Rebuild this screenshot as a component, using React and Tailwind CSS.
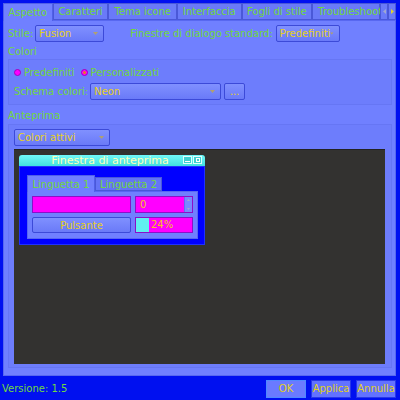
import React from 'react';

const font = { fontFamily: '"DejaVu Sans", sans-serif' };

function Combo({ label, w }) {
    return (
        <div className={`h-[17px] ${w} flex items-center justify-between pl-[3px] pr-[5px] rounded-[2px] border border-[#3c4ad8] bg-gradient-to-b from-[#8090ff] to-[#6a7af8] text-[#e8d020]`}>
            <span className="leading-none">{label}</span>
            <svg width="5" height="3" viewBox="0 0 5 3"><path d="M0 0h5L2.5 3z" fill="#b0a070" /></svg>
        </div>
    );
}

function Tab({ label, active, w }) {
    return active ? (
        <div className={`${w} h-[18px] -mb-px z-10 flex items-center justify-center bg-[#7080ff] border border-b-0 border-[#5060e8] text-[#70d840]`}>{label}</div>
    ) : (
        <div className={`${w} h-[17px] flex items-center justify-center bg-[#6a7af8] border border-[#4a58d8] text-[#70d840]`}>{label}</div>
    );
}

function Radio({ checked, label }) {
    return (
        <div className="flex items-center gap-[3px]">
            <div className="w-[7px] h-[7px] rounded-full bg-[#ff00ff] border border-[#a000c0] flex items-center justify-center">
                {checked && <div className="w-[3px] h-[3px] rounded-full bg-[#e08020]" />}
            </div>
            <span className="text-[#70d840]">{label}</span>
        </div>
    );
}

export default function App() {
    return (
        <div className="w-[400px] h-[400px] bg-[#0010f0] flex flex-col pl-[3px] pr-[4px] pt-[3px] text-[10px] overflow-hidden" style={font}>
            {/* tab bar */}
            <div className="flex items-end h-[17px] relative">
                <Tab label="Aspetto" active w="w-[50px]" />
                <Tab label="Caratteri" w="w-[56px]" />
                <Tab label="Tema icone" w="w-[69px]" />
                <Tab label="Interfaccia" w="w-[65px]" />
                <Tab label="Fogli di stile" w="w-[71px]" />
                <div className="w-[68px] h-[17px] whitespace-nowrap flex items-center pl-[5px] bg-[#6a7af8] border border-[#4a58d8] text-[#70d840]">Troubleshoot</div>
                <div className="w-[8px] h-[17px] bg-[#6a7af8] border border-[#4a58d8] flex items-center justify-center">
                    <svg width="3" height="5" viewBox="0 0 3 5"><path d="M3 0v5L0 2.5z" fill="#a0a8d0" /></svg>
                </div>
                <div className="w-[8px] h-[17px] bg-[#6a7af8] border border-[#4a58d8] flex items-center justify-center">
                    <svg width="3" height="5" viewBox="0 0 3 5"><path d="M0 0v5L3 2.5z" fill="#e0d030" /></svg>
                </div>
            </div>

            {/* panel */}
            <div className="h-[356px] bg-[#7080ff] border border-[#5868f0] flex flex-col px-[4px]">
                <div className="flex items-center h-[17px] mt-[4px]">
                    <span className="text-[#70d840] mr-[2px]">Stile:</span>
                    <Combo label="Fusion" w="w-[69px]" />
                    <span className="text-[#70d840] ml-[26px] mr-[3px]">Finestre di dialogo standard:</span>
                    <Combo label="Predefiniti" w="w-[64px]" />
                </div>
                <div className="text-[#70d840] h-[12px] mt-[4px] leading-[12px]">Colori</div>
                <div className="mt-[1px] h-[46px] w-[384px] bg-[#6d7dfc] border border-[#6676f4] flex flex-col px-[5px]">
                    <div className="flex items-center gap-[6px] mt-[6px] h-[12px]">
                        <Radio label="Predefiniti" />
                        <Radio checked label="Personalizzati" />
                    </div>
                    <div className="flex items-center mt-[5px] h-[17px]">
                        <span className="text-[#70d840] mr-[2px]">Schema colori:</span>
                        <Combo label="Neon" w="w-[131px]" />
                        <div className="ml-[3px] w-[21px] h-[17px] rounded-[2px] border border-[#3c4ad8] bg-gradient-to-b from-[#8090ff] to-[#6a7af8] flex items-center justify-center text-[#e8d020] leading-none">...</div>
                    </div>
                </div>
                <div className="text-[#70d840] h-[12px] mt-[5px] leading-[12px]">Anteprima</div>
                <div className="mt-[2px] h-[244px] w-[384px] bg-[#6d7dfc] border border-[#6676f4] flex flex-col pl-[5px] pt-[4px]">
                    <Combo label="Colori attivi" w="w-[96px]" />
                    <div className="mt-[3px] w-[371px] h-[215px] bg-[#333230] border-t border-[#222] pl-[5px] pt-[5px]">
                        {/* preview window */}
                        <div className="w-[186px] flex flex-col">
                            <div className="h-[11px] rounded-t-[3px] bg-gradient-to-b from-[#70f8f8] to-[#40e0e0] relative flex items-center justify-center">
                                <span className="text-[#ffffb8] text-[11px] leading-none -ml-[4px]">Finestra di anteprima</span>
                                <div className="absolute right-[3px] top-[1px] flex gap-[1px]">
                                    <div className="w-[9px] h-[8px] border border-[#e0ffff] bg-[#40d0d0] flex items-end justify-center pb-[1px]"><div className="w-[5px] h-px bg-white" /></div>
                                    <div className="w-[9px] h-[8px] border border-[#e0ffff] bg-[#40d0d0] flex items-center justify-center"><div className="w-[4px] h-[4px] border border-white" /></div>
                                </div>
                            </div>
                            <div className="h-[79px] bg-[#0000ff] border border-[#2030ff] pl-[7px] pt-[7px]">
                                <div className="flex items-end h-[17px]">
                                    <div className="w-[68px] h-[17px] -mb-px z-10 bg-[#7080ff] border border-b-0 border-[#5060e8] flex items-center justify-center text-[#70d840]">Linguetta 1</div>
                                    <div className="w-[67px] h-[14px] bg-[#6474f6] border border-[#4a58d8] flex items-center justify-center text-[#70d840]">Linguetta 2</div>
                                </div>
                                <div className="w-[171px] h-[48px] bg-[#7080ff] border border-[#5868f0] pl-[4px] pt-[4px] flex flex-col gap-[4px]">
                                    <div className="flex gap-[4px] h-[17px]">
                                        <div className="w-[99px] h-[17px] bg-[#ff00ff] border border-[#8a10c8]" />
                                        <div className="w-[58px] h-[17px] bg-[#ff00ff] border border-[#8a10c8] flex">
                                            <span className="flex-1 pl-[4px] text-[#f0c820] leading-[15px]">0</span>
                                            <div className="w-[8px] h-full bg-[#7888ff] border-l border-[#6070f0] flex flex-col items-center justify-between py-[2px]">
                                                <svg width="3" height="2" viewBox="0 0 3 2"><path d="M0 2h3L1.5 0z" fill="#a0a8d0" /></svg>
                                                <svg width="3" height="2" viewBox="0 0 3 2"><path d="M0 0h3L1.5 2z" fill="#a0a8d0" /></svg>
                                            </div>
                                        </div>
                                    </div>
                                    <div className="flex gap-[4px] h-[16px]">
                                        <div className="w-[99px] h-[16px] rounded-[2px] border border-[#3c4ad8] bg-gradient-to-b from-[#8090ff] to-[#6a7af8] flex items-center justify-center text-[#e8d020]">Pulsante</div>
                                        <div className="w-[58px] h-[16px] bg-[#ff00ff] border border-[#8a10c8] flex">
                                            <div className="w-[13px] h-full bg-[#60f0f0]" />
                                            <span className="flex-1 pl-[2px] text-[#f8c020] leading-[14px]">24%</span>
                                        </div>
                                    </div>
                                </div>
                            </div>
                        </div>
                    </div>
                </div>
            </div>

            {/* bottom bar */}
            <div className="flex items-center h-[24px] -ml-[1px]">
                <span className="text-[#70d840] flex-1">Versione: 1.5</span>
                <div className="flex gap-[5px] mt-[1px]">
                    <div className="w-[40px] h-[18px] bg-[#6a7aff] border border-[#4f88ff] flex items-center justify-center text-[#e0d020]">OK</div>
                    <div className="w-[40px] h-[18px] bg-[#6272ff] border border-[#2838e8] flex items-center justify-center text-[#e0d020]">Applica</div>
                    <div className="w-[40px] h-[18px] bg-[#6272ff] border border-[#2838e8] flex items-center justify-center text-[#e0d020]">Annulla</div>
                </div>
            </div>
        </div>
    );
}
